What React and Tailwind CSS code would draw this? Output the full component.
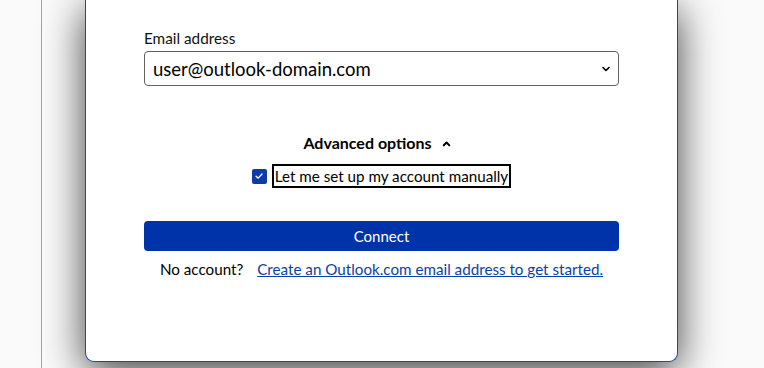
import React from 'react'

const Chevron = ({ up, className }) => (
  <svg viewBox="0 0 12 12" className={className} fill="none" stroke="currentColor" strokeWidth={up ? 2.2 : 1.6} strokeLinecap="round" strokeLinejoin="round">
    {up ? <path d="M3 8 L6 5 L9 8" /> : <path d="M3 4.5 L6 7.5 L9 4.5" />}
  </svg>
)

export default function App() {
  return (
    <div className="w-full h-[368px] bg-[#fafafa] flex overflow-hidden" style={{ fontFamily: 'Lato, "Noto Sans", sans-serif' }}>
      <div className="w-[42px] shrink-0 h-full border-r border-[#a6a6a6]" />
      <div className="flex-1 pl-[43px] relative">
        <div className="w-[593px] h-[362px] bg-white border-x border-b border-[#1d47a8] rounded-b-[9px] shadow-[0_10px_42px_rgba(0,0,0,0.75)] px-[58px] pt-[28px] flex flex-col text-[#111]">
          <label className="text-[15.3px] leading-5">Email address</label>
          <div className="mt-[3px] h-[35px] border border-[#616161] rounded-[4px] flex items-center pl-[8px] pr-[6px]">
            <span className="flex-1 text-[18.5px] leading-6 text-black">user@outlook-domain.com</span>
            <Chevron className="w-[12px] h-[12px] text-black" />
          </div>
          <div className="mt-[47px] flex items-center justify-center gap-[9px] pr-[8px]">
            <span className="text-[16px] leading-5 font-bold text-black">Advanced options</span>
            <Chevron up className="w-[11px] h-[11px] text-black" />
          </div>
          <div className="mt-[11px] flex items-center justify-center gap-[5px]">
            <span className="w-[15px] h-[15px] rounded-[2px] bg-[#0f3ba9] flex items-center justify-center">
              <svg viewBox="0 0 12 12" className="w-[10px] h-[10px]" fill="none" stroke="white" strokeWidth="1.6" strokeLinecap="round" strokeLinejoin="round">
                <path d="M2.5 6.3 L5 8.6 L9.6 3.6" />
              </svg>
            </span>
            <span className="border-2 border-black px-[1px] h-[24px] flex items-center text-[15.2px] text-black">Let me set up my account manually</span>
          </div>
          <button className="mt-[33px] h-[30px] w-full rounded-[4px] bg-[#0033a9] text-white text-[15px]">Connect</button>
          <div className="mt-[8px] flex justify-center gap-[14px] text-[15.2px] leading-5">
            <span className="text-black">No account?</span>
            <a href="#" className="text-[#0b3ea8] underline">Create an Outlook.com email address to get started.</a>
          </div>
        </div>
      </div>
    </div>
  )
}
